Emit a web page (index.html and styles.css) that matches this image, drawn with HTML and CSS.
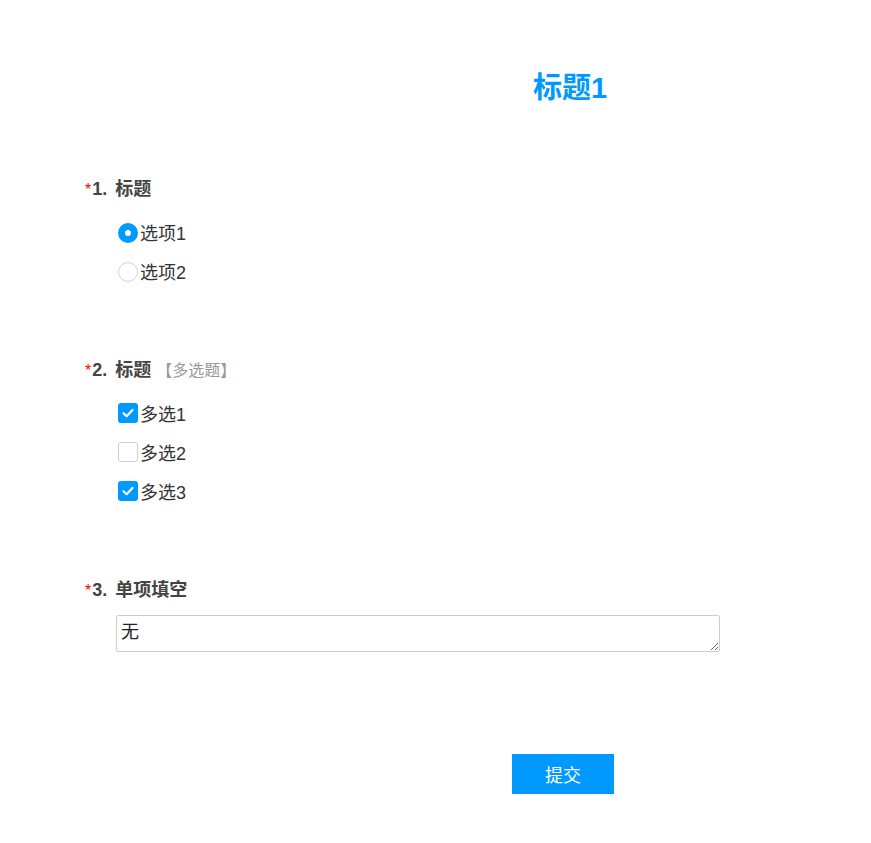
FILE: index.html
```html
<!DOCTYPE html>
<html lang="zh">
<head>
<meta charset="utf-8">
<title>标题1</title>
<link rel="stylesheet" href="styles.css">
</head>
<body>
<div class="page">
  <h1 class="title">标题1</h1>

  <div class="question">
    <div class="q-title"><span class="star">*</span><span class="num">1.</span> 标题</div>
    <div class="options">
      <label class="option"><span class="radio checked"></span>选项1</label>
      <label class="option"><span class="radio"></span>选项2</label>
    </div>
  </div>

  <div class="question">
    <div class="q-title"><span class="star">*</span><span class="num">2.</span> 标题 <span class="q-type">【多选题】</span></div>
    <div class="options">
      <label class="option"><span class="check checked"><svg viewBox="0 0 20 20" width="20" height="20"><path d="M5.5 10.2 L8.6 13.2 L14.5 7" fill="none" stroke="#fff" stroke-width="2.2" stroke-linecap="round" stroke-linejoin="round"/></svg></span>多选1</label>
      <label class="option"><span class="check"></span>多选2</label>
      <label class="option"><span class="check checked"><svg viewBox="0 0 20 20" width="20" height="20"><path d="M5.5 10.2 L8.6 13.2 L14.5 7" fill="none" stroke="#fff" stroke-width="2.2" stroke-linecap="round" stroke-linejoin="round"/></svg></span>多选3</label>
    </div>
  </div>

  <div class="question last">
    <div class="q-title"><span class="star">*</span><span class="num">3.</span> 单项填空</div>
    <textarea class="fill">无</textarea>
  </div>

  <div class="actions">
    <button class="submit" type="button">提交</button>
  </div>
</div>
</body>
</html>
```
FILE: styles.css
```css
html, body {
  margin: 0;
  padding: 0;
  background: #fff;
}
body {
  font-family: "Liberation Sans", "Noto Sans CJK SC", sans-serif;
  color: #333;
}
.page {
  box-sizing: border-box;
  width: 871px;
  padding: 68px 0 40px 85px;
}
.title {
  margin: 0 0 69px 0;
  padding-left: 184px;
  height: 40px;
  line-height: 40px;
  font-size: 29px;
  font-weight: bold;
  color: #0099ff;
  text-align: center;
}
.question {
  margin-bottom: 68px;
}
.question.last {
  margin-bottom: 0;
}
.q-title {
  height: 24px;
  line-height: 24px;
  font-size: 18px;
  font-weight: bold;
  color: #444;
}
.star {
  color: #f00;
  font-size: 16px;
  font-weight: normal;
  margin-right: 1px;
}
.num {
  margin-right: 3px;
}
.q-type {
  color: #999;
  font-weight: normal;
  font-size: 16px;
}
.options {
  margin-top: 11px;
  padding-left: 33px;
}
.option {
  display: flex;
  align-items: center;
  height: 39px;
  font-size: 18px;
  color: #333;
}
.radio {
  box-sizing: border-box;
  width: 20px;
  height: 20px;
  border-radius: 50%;
  border: 1px solid #d3d3d3;
  background: #fff;
  margin: 2px 2px 0 0;
}
.radio.checked {
  border: 7px solid #0099ff;
  background: #fff;
}
.check {
  box-sizing: border-box;
  width: 20px;
  height: 20px;
  border-radius: 3px;
  border: 1px solid #d0d0d0;
  background: #fff;
  margin: 0 2px 0 0;
  display: flex;
}
.check.checked {
  border: none;
  background: #0099ff;
}
.check svg {
  display: block;
}
.fill {
  display: block;
  box-sizing: border-box;
  margin: 13px 0 0 31px;
  width: 604px;
  height: 37px;
  padding: 3px 4px;
  border: 1px solid #ccc;
  border-radius: 2px;
  font-family: "Liberation Sans", "Noto Sans CJK SC", sans-serif;
  font-size: 18px;
  line-height: 26px;
  color: #222;
  resize: both;
  outline: none;
}
.actions {
  margin-top: 102px;
  padding-left: 427px;
}
.submit {
  width: 102px;
  height: 40px;
  border: none;
  border-radius: 0;
  background: #0099ff;
  color: #fff;
  font-family: "Liberation Sans", "Noto Sans CJK SC", sans-serif;
  font-size: 18px;
  padding: 0;
  cursor: pointer;
}
```
